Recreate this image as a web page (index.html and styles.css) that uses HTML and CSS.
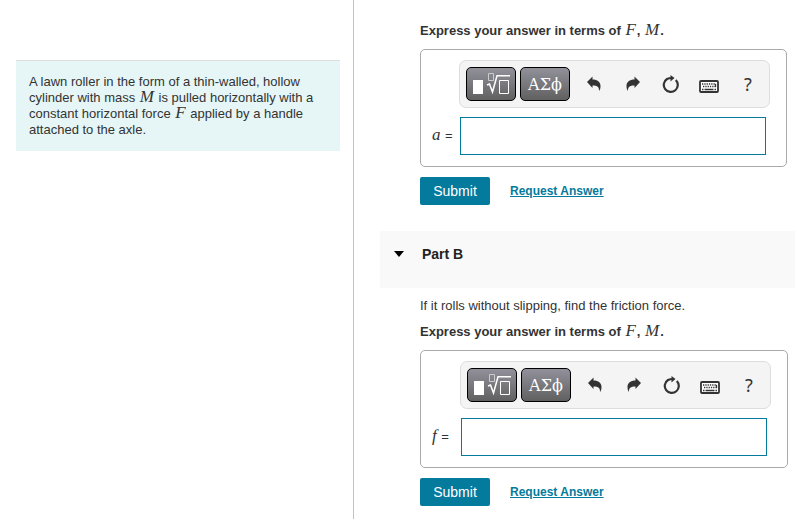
FILE: index.html
```
<!DOCTYPE html>
<html lang="en">
<head>
<meta charset="utf-8">
<title>Lawn roller</title>
<link rel="stylesheet" href="styles.css">
</head>
<body>
<svg class="defs" aria-hidden="true">
  <symbol id="template" viewBox="0 0 38 22">
    <path fill="#fff" d="M1 7h10v14H1z"/>
    <path fill="none" stroke="#ccc" d="M16.500 .5h5v7h-5z"/>
    <path fill="none" stroke="#fff" stroke-width="1.500" d="M15 12l2.500-1 3 8 4.500-16.300H38"/>
    <path fill="none" stroke="#fff" d="M27.500 7.500h9v13h-9z"/>
  </symbol>
  <symbol id="undo" viewBox="0 0 16 16">
    <path d="M1 6L6.500 .5v3C11.500 3.500 14.500 6 14.500 10c0 2-.5 4-1.500 5 .3-4-1.500-5.500-6.500-5.500v2.500z"/>
  </symbol>
  <symbol id="redo" viewBox="0 0 16 16">
    <path d="M15 6L9.500 .5v3C4.500 3.500 1.500 6 1.500 10c0 2 .5 4 1.500 5-.3-4 1.500-5.500 6.500-5.500v2.500z"/>
  </symbol>
  <symbol id="reset" viewBox="0 0 18 18">
    <path fill="none" stroke="currentColor" stroke-width="2.200" d="M13.800 5A7 7 0 1 1 5 4Q7 3 10 3"/>
    <path d="M8.500 0L12.500 3 8.500 6.500z"/>
  </symbol>
  <symbol id="keyboard" viewBox="0 0 20 13">
    <rect x="1" y="1" width="18" height="11" rx="1" fill="#fff" stroke="currentColor" stroke-width="1.800"/>
    <path fill="none" stroke="currentColor" stroke-width="1.300" stroke-dasharray="1.300 1" d="M3 4h14M4 6.500h13"/>
    <path fill="none" stroke="currentColor" stroke-width="1.300" d="M3 9.500h1.500M5.500 9.500h9M15.500 9.500H17M16.500 4v3"/>
  </symbol>
</svg>
<div class="page">
  <aside class="intro">
    <p class="problem">A lawn roller in the form of a thin-walled, hollow cylinder with mass <i class="math">M</i> is pulled horizontally with a constant horizontal force <i class="math">F</i> applied by a handle attached to the axle.</p>
  </aside>
  <main class="parts">
    <form class="part">
      <p class="instruction">Express your answer in terms of <i class="math">F</i>, <i class="math">M</i>.</p>
      <div class="editor">
        <div class="toolbar">
          <button class="palette" type="button" aria-label="Templates"><svg width="38" height="22"><use href="#template"/></svg></button>
          <button class="palette" type="button" aria-label="Symbols">ΑΣϕ</button>
          <div class="tools">
            <button class="tool" type="button" aria-label="Undo"><svg width="16" height="16"><use href="#undo"/></svg></button>
            <button class="tool" type="button" aria-label="Redo"><svg width="16" height="16"><use href="#redo"/></svg></button>
            <button class="tool" type="button" aria-label="Reset"><svg width="18" height="18"><use href="#reset"/></svg></button>
            <button class="tool keyboard" type="button" aria-label="Keyboard shortcuts"><svg width="20" height="13"><use href="#keyboard"/></svg></button>
            <button class="tool" type="button" aria-label="Help">?</button>
          </div>
        </div>
        <label class="variable" for="answer-a"><i class="math">a</i> =</label>
        <input class="answer" id="answer-a" type="text">
      </div>
      <div class="actions">
        <button class="submit" type="submit">Submit</button>
        <a class="request" href="#">Request Answer</a>
      </div>
    </form>
    <h2 class="heading"><button class="toggle" type="button"><svg width="10" height="6" viewBox="0 0 10 6"><path d="M0 0h10L5 6z"/></svg>Part B</button></h2>
    <form class="part">
      <p class="question">If it rolls without slipping, find the friction force.</p>
      <p class="instruction">Express your answer in terms of <i class="math">F</i>, <i class="math">M</i>.</p>
      <div class="editor wide">
        <div class="toolbar">
          <button class="palette" type="button" aria-label="Templates"><svg width="38" height="22"><use href="#template"/></svg></button>
          <button class="palette" type="button" aria-label="Symbols">ΑΣϕ</button>
          <div class="tools">
            <button class="tool" type="button" aria-label="Undo"><svg width="16" height="16"><use href="#undo"/></svg></button>
            <button class="tool" type="button" aria-label="Redo"><svg width="16" height="16"><use href="#redo"/></svg></button>
            <button class="tool" type="button" aria-label="Reset"><svg width="18" height="18"><use href="#reset"/></svg></button>
            <button class="tool keyboard" type="button" aria-label="Keyboard shortcuts"><svg width="20" height="13"><use href="#keyboard"/></svg></button>
            <button class="tool" type="button" aria-label="Help">?</button>
          </div>
        </div>
        <label class="variable" for="answer-f"><i class="math">f</i> =</label>
        <input class="answer" id="answer-f" type="text">
      </div>
      <div class="actions">
        <button class="submit" type="submit">Submit</button>
        <a class="request" href="#">Request Answer</a>
      </div>
    </form>
  </main>
</div>
</body>
</html>
```
FILE: styles.css
```
* {
  box-sizing: border-box;
}

body {
  margin: 0;
  background: #fff;
  color: #333;
  font: 13px/16px "Liberation Sans", Arial, sans-serif;
}

button {
  padding: 0;
  border: 0;
  font-family: inherit;
  cursor: pointer;
}

p,
h2 {
  margin: 0;
}

.defs {
  display: none;
}

.page {
  display: grid;
  grid-template-columns: 354px minmax(0, 1fr);
  min-height: 100vh;
}

.intro {
  padding: 60px 13px 0 16px;
  border-right: 1px solid #b8c4d0;
}

.problem {
  padding: 13px 20px 13px 13px;
  border-top: 1px solid #ddd;
  background: #e6f6f7;
}

.math {
  margin: 0 1px;
  font-family: "Liberation Serif", "Times New Roman", serif;
  font-size: 17px;
  font-weight: normal;
  line-height: 14px;
}

.parts {
  padding: 21px 0 13px 26px;
}

.part {
  padding: 0 8px 0 40px;
}

.question {
  padding: 9px 0 7px;
  line-height: 18px;
}

.instruction {
  font-weight: bold;
  line-height: 20px;
}

.editor {
  display: grid;
  grid-template-columns: 28px minmax(0, 1fr);
  row-gap: 9px;
  margin-top: 8px;
  padding: 10px 16px 11px 10px;
  border: 1px solid #aaa;
  border-radius: 5px;
}

.wide {
  grid-template-columns: 29px minmax(0, 1fr);
  margin-right: -1px;
}

.toolbar {
  grid-column: 2;
  display: flex;
  align-items: center;
  gap: 4px;
  height: 48px;
  padding: 0 2px 0 6px;
  border: 1px solid #ddd;
  border-radius: 7px;
  background: #f4f4f4;
}

.palette {
  display: flex;
  align-items: center;
  justify-content: center;
  width: 50px;
  height: 34px;
  border: 1px solid #000;
  border-radius: 5px;
  background: linear-gradient(#92919b, #606060);
  color: #fff;
  font: 16px "DejaVu Serif", serif;
}

.tools {
  display: flex;
  flex: 1;
  margin-left: 1px;
}

.tool {
  display: flex;
  flex: 1;
  align-items: center;
  justify-content: center;
  height: 34px;
  background: none;
  color: #333;
  fill: currentColor;
  font: 18px "Noto Sans", sans-serif;
}

.keyboard {
  padding-top: 4px;
}

.variable {
  align-self: center;
  white-space: nowrap;
}

.answer {
  height: 38px;
  margin: 0 4px 0 1px;
  padding: 0 8px;
  border: 1px solid #047a9c;
  border-radius: 0;
  background: #fff;
  font: inherit;
}

.actions {
  display: flex;
  align-items: center;
  gap: 20px;
  margin-top: 10px;
}

.submit {
  width: 70px;
  height: 28px;
  border-radius: 2px;
  background: #047a9c;
  color: #fff;
  font-size: 14px;
}

.request {
  color: #047a9c;
  font-size: 12px;
  font-weight: bold;
}

.heading {
  height: 57px;
  margin-top: 26px;
  padding: 14px;
  background: #f9f9f9;
}

.toggle {
  display: flex;
  align-items: center;
  gap: 18px;
  background: none;
  color: #222;
  font-size: 14px;
  font-weight: bold;
  line-height: 18px;
}
```
